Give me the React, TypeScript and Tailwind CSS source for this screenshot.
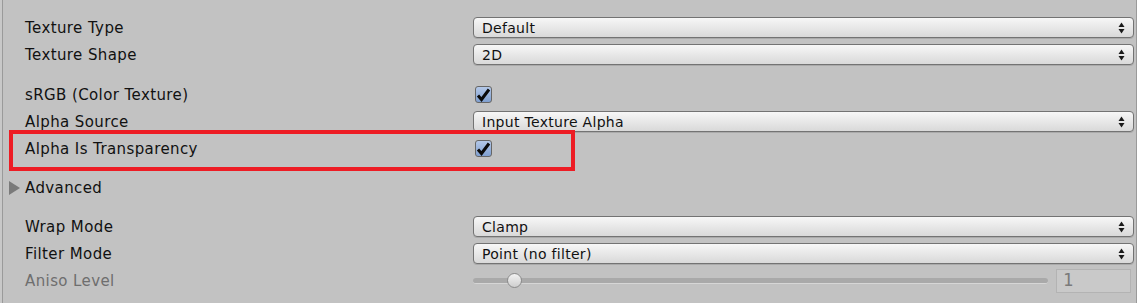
import React from 'react';

const font = { fontFamily: '"DejaVu Sans", Verdana, sans-serif' };

function Arrows() {
  return (
    <svg width="7" height="12" viewBox="0 0 7 12" className="shrink-0">
      <path d="M3.5 0.5 L6.5 5 L0.5 5 Z" fill="#1a1a1a" />
      <path d="M3.5 11.5 L6.5 7 L0.5 7 Z" fill="#1a1a1a" />
    </svg>
  );
}

function Dropdown({ value }: { value: string }) {
  return (
    <div className="flex-1 h-[21px] flex items-center justify-between pl-[8px] pr-[8px] rounded-[4px] border border-[#737373] bg-gradient-to-b from-[#f7f7f7] to-[#d9d9d9] shadow-[0_1px_0_rgba(0,0,0,0.12)]">
      <span className="text-[14px] tracking-[0.3px] text-[#111] leading-none">{value}</span>
      <Arrows />
    </div>
  );
}

function Checkbox() {
  return (
    <div className="ml-[2px] w-[17px] h-[17px] rounded-[3px] border border-[#666] bg-gradient-to-b from-[#b4c8e8] to-[#7f9fcf] flex items-center justify-center">
      <svg width="15" height="14" viewBox="0 0 15 14">
        <path d="M2 7.5 L5.5 11.5 L13 1.5" fill="none" stroke="#0a0a0a" strokeWidth="3" strokeLinejoin="miter" />
      </svg>
    </div>
  );
}

function Row({ label, children, muted, className = '' }: { label: string; children?: React.ReactNode; muted?: boolean; className?: string }) {
  return (
    <div className={'relative flex items-center h-[27px] ' + className}>
      <div className={'w-[470px] shrink-0 pl-[22px] pt-[1px] text-[15px] tracking-[0.4px] ' + (muted ? 'text-[#6e6e6e]' : 'text-[#111]')}>{label}</div>
      <div className="flex-1 flex items-center">{children}</div>
    </div>
  );
}

export default function App() {
  return (
    <div className="w-[1137px] h-[303px] bg-[#c2c2c2] flex overflow-hidden" style={font}>
      <div className="w-[2px] shrink-0 bg-[#c8c8c8]" />
      <div className="flex-1 border-l border-[#9a9a9a] border-r pr-[2px] pt-[14px] flex flex-col">
        <Row label="Texture Type"><Dropdown value="Default" /></Row>
        <Row label="Texture Shape"><Dropdown value="2D" /></Row>

        <Row label="sRGB (Color Texture)" className="mt-[13px]"><Checkbox /></Row>
        <Row label="Alpha Source"><Dropdown value="Input Texture Alpha" /></Row>
        <Row label="Alpha Is Transparency">
          <Checkbox />
          <div className="absolute left-[6px] top-[-5px] w-[566px] h-[41px] border-4 border-[#ed1c24]" />
        </Row>

        <div className="mt-[12px] h-[27px] flex items-center">
          <svg width="12" height="14" viewBox="0 0 12 14" className="ml-[6px] mr-[4px]">
            <path d="M0 0 L11 7 L0 14 Z" fill="#7a7a7a" />
          </svg>
          <span className="text-[15px] tracking-[0.4px] pt-[1px] text-[#111]">Advanced</span>
        </div>

        <Row label="Wrap Mode" className="mt-[12px] h-[26px]"><Dropdown value="Clamp" /></Row>
        <Row label="Filter Mode" className="h-[26px]"><Dropdown value="Point (no filter)" /></Row>
        <Row label="Aniso Level" muted className="h-[27px]">
          <div className="relative w-[575px] h-[6px] rounded-full bg-[#a9a9a9] border-b border-[#d6d6d6]">
            <div className="absolute left-[34px] top-[-5px] w-[15px] h-[15px] rounded-full border border-[#8a8a8a] bg-gradient-to-b from-[#f2f2f2] to-[#cfcfcf]" />
          </div>
          <div className="ml-[8px] w-[75px] h-[24px] border border-[#b3b3b3] bg-[#c9c9c9] flex items-center pl-[6px] text-[17px] text-[#7a7a7a]" style={{ fontFamily: '"DejaVu Sans Mono", monospace' }}>
            1
          </div>
        </Row>
      </div>
    </div>
  );
}
